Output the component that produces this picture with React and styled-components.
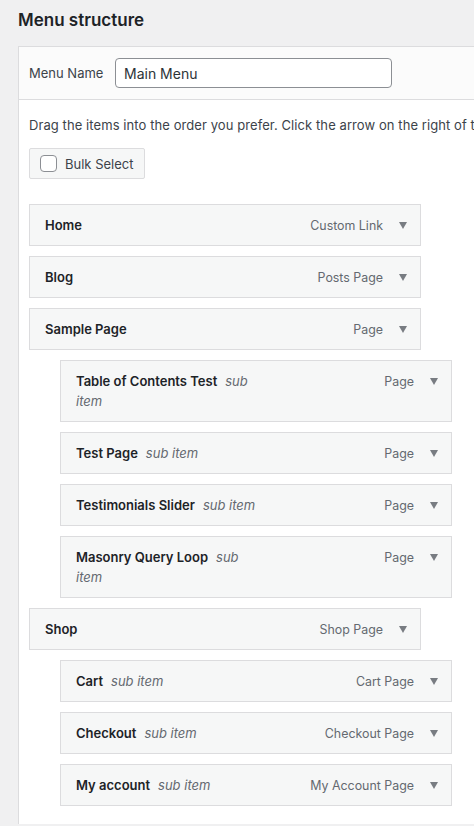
import React from "react";
import styled, { createGlobalStyle } from "styled-components";

const Global = createGlobalStyle`
  html, body { margin: 0; padding: 0; }
  body {
    background: #f0f0f1;
    font-family: Inter, "Noto Sans", sans-serif;
    color: #1d2327;
    overflow: hidden;
  }
`;

const Page = styled.div`
  padding-left: 18px;
  width: 474px;
  box-sizing: border-box;
  overflow: hidden;
`;

const Heading = styled.h2`
  margin: 0;
  padding-top: 9px;
  height: 37px;
  font-size: 17px;
  font-weight: 600;
  line-height: 22px;
  color: #1d2327;
`;

const Panel = styled.div`
  width: 640px;
  background: #fff;
  border-top: 1px solid #dcdcde;
  border-left: 1px solid #dcdcde;
`;

const PanelHeader = styled.div`
  display: flex;
  align-items: center;
  height: 52px;
  padding-left: 10px;
  background: #fbfbfb;
  border-bottom: 1px solid #dcdcde;
`;

const Label = styled.label`
  font-size: 13px;
  color: #3c434a;
  width: 86px;
`;

const NameInput = styled.div`
  box-sizing: border-box;
  width: 277px;
  height: 30px;
  border: 1px solid #8c8f94;
  border-radius: 4px;
  background: #fff;
  display: flex;
  align-items: center;
  padding-left: 8px;
  font-size: 14px;
  color: #2c3338;
`;

const PanelBody = styled.div`
  padding: 15px 10px 18px;
`;

const Hint = styled.p`
  margin: 0 0 13px;
  font-size: 13px;
  letter-spacing: 0.08px;
  line-height: 20px;
  color: #3c434a;
  white-space: nowrap;
`;

const BulkButton = styled.div`
  box-sizing: border-box;
  display: inline-flex;
  align-items: center;
  gap: 8px;
  height: 31px;
  padding: 0 11px 0 10px;
  background: #f6f7f7;
  border: 1px solid #dcdcde;
  border-radius: 2px;
  font-size: 13px;
  color: #3c434a;
`;

const Check = styled.span`
  box-sizing: border-box;
  width: 17px;
  height: 17px;
  border: 1px solid #8c8f94;
  border-radius: 4px;
  background: #fff;
`;

const List = styled.div`
  margin-top: 25px;
  display: flex;
  flex-direction: column;
  gap: 10px;
`;

const Item = styled.div`
  box-sizing: border-box;
  width: 392px;
  margin-left: ${({ $depth }) => ($depth ? 31 : 0)}px;
  display: flex;
  align-items: flex-start;
  padding: 10px 13px 10px 15px;
  background: #f6f7f7;
  border: 1px solid #dcdcde;
  line-height: 20px;
  min-height: 42px;
`;

const Title = styled.div`
  width: 186px;
  font-size: 13px;
`;

const Name = styled.span`
  font-weight: 600;
  color: #1d2327;
`;

const Sub = styled.span`
  font-style: italic;
  color: #646970;
  margin-left: 8px;
`;

const Type = styled.span`
  margin-left: auto;
  padding-top: 2px;
  line-height: 18px;
  font-size: 12.4px;
  color: #646970;
`;

const Arrow = styled.span`
  margin-left: 16px;
  margin-top: 7px;
  width: 0;
  height: 0;
  border-left: 4px solid transparent;
  border-right: 4px solid transparent;
  border-top: 7px solid #787c82;
`;

const items = [
  { name: "Home", type: "Custom Link" },
  { name: "Blog", type: "Posts Page" },
  { name: "Sample Page", type: "Page" },
  { name: "Table of Contents Test", type: "Page", sub: true },
  { name: "Test Page", type: "Page", sub: true },
  { name: "Testimonials Slider", type: "Page", sub: true },
  { name: "Masonry Query Loop", type: "Page", sub: true },
  { name: "Shop", type: "Shop Page" },
  { name: "Cart", type: "Cart Page", sub: true },
  { name: "Checkout", type: "Checkout Page", sub: true },
  { name: "My account", type: "My Account Page", sub: true },
];

export default function App() {
  return (
    <Page>
      <Global />
      <Heading>Menu structure</Heading>
      <Panel>
        <PanelHeader>
          <Label>Menu Name</Label>
          <NameInput>Main Menu</NameInput>
        </PanelHeader>
        <PanelBody>
          <Hint>
            Drag the items into the order you prefer. Click the arrow on the right of the item to reveal additional configuration options.
          </Hint>
          <BulkButton>
            <Check />
            Bulk Select
          </BulkButton>
          <List>
            {items.map((it) => (
              <Item key={it.name} $depth={it.sub}>
                <Title>
                  <Name>{it.name}</Name>
                  {it.sub && <Sub>sub item</Sub>}
                </Title>
                <Type>{it.type}</Type>
                <Arrow />
              </Item>
            ))}
          </List>
        </PanelBody>
      </Panel>
    </Page>
  );
}
